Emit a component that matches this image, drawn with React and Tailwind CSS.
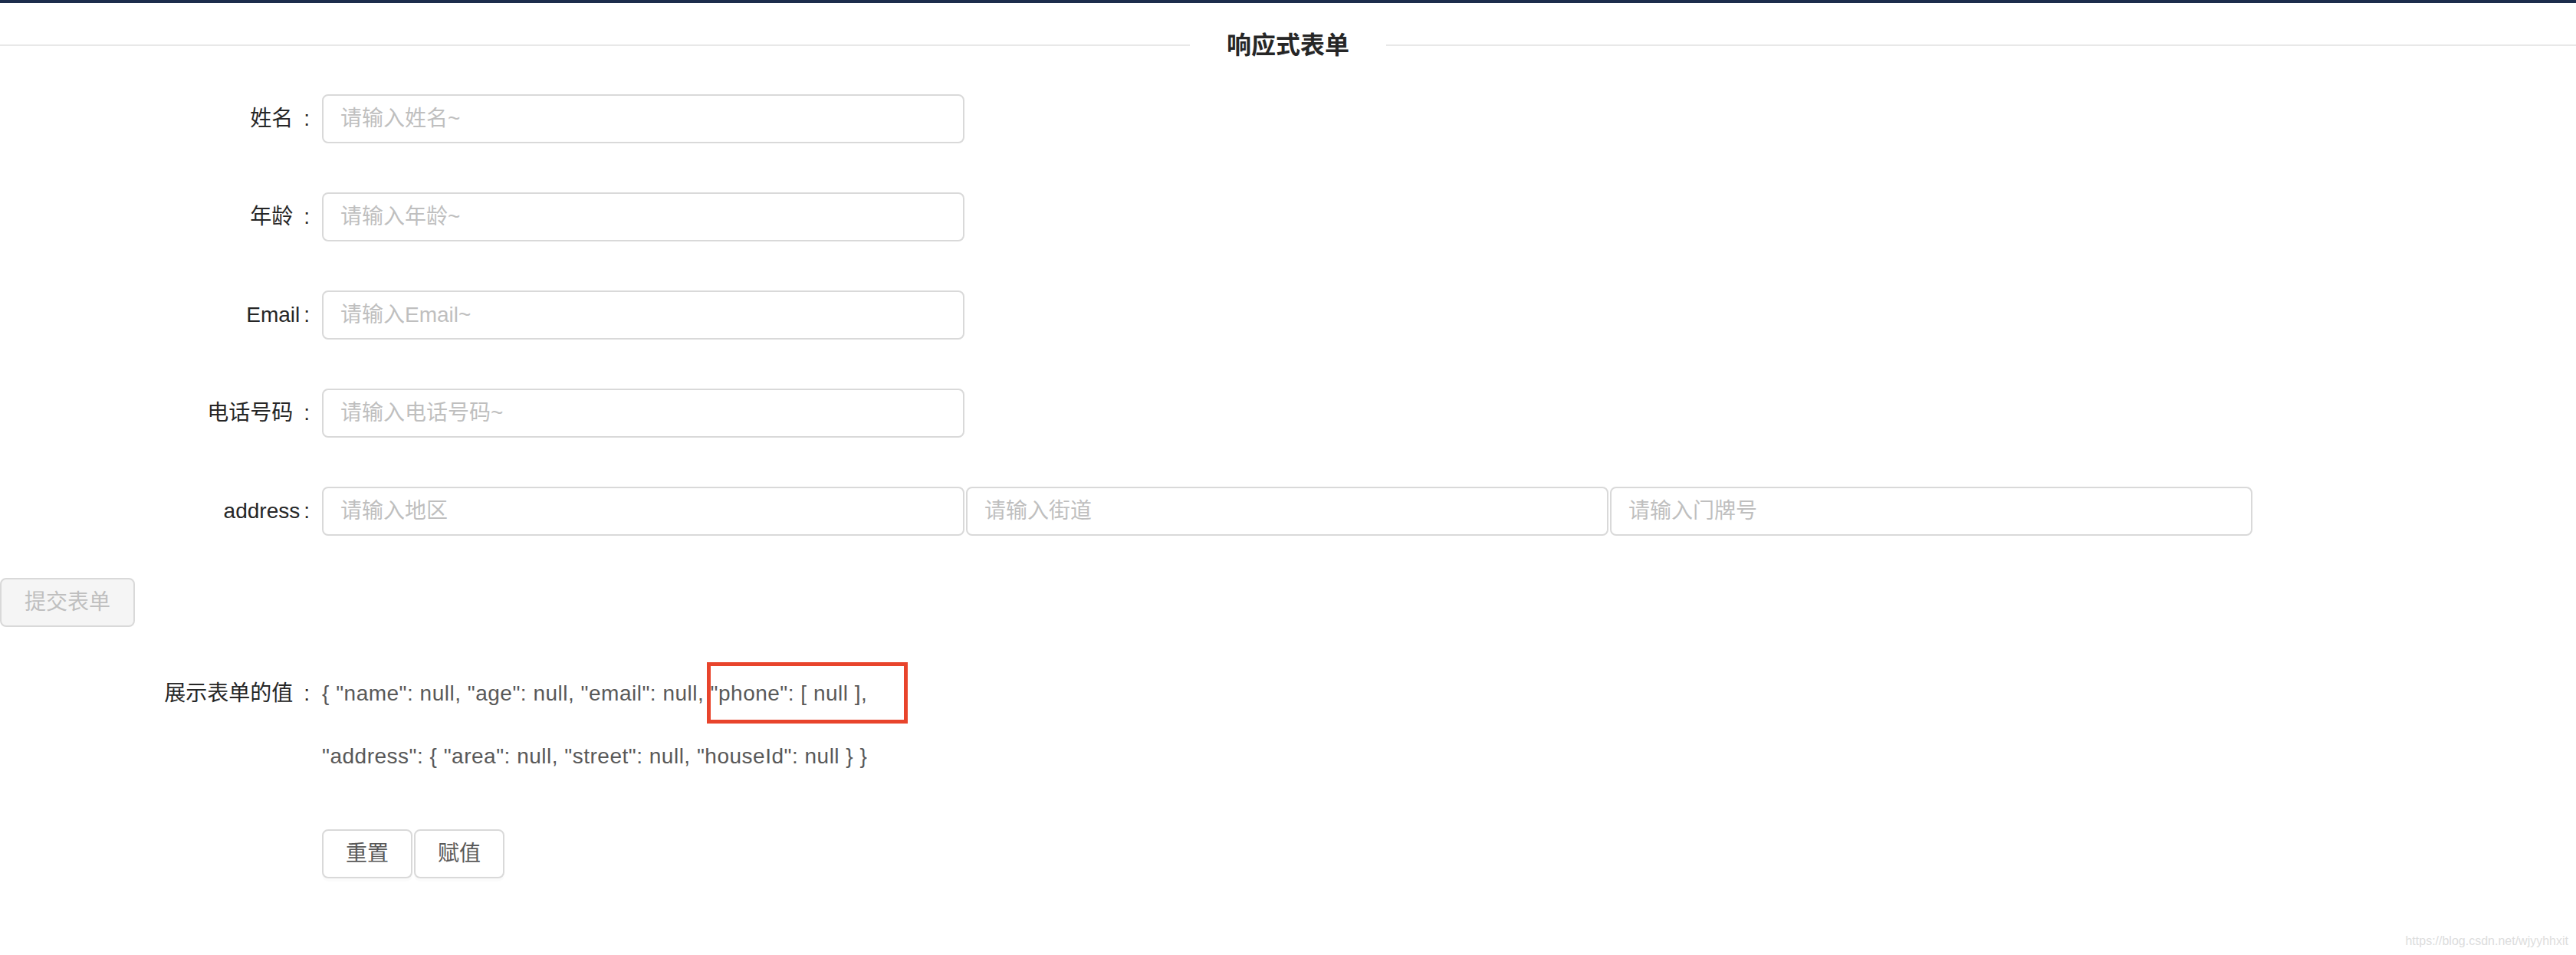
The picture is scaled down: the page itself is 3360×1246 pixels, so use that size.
import React from "react";

const rows = [
  { label: "姓名", ph: "请输入姓名~" },
  { label: "年龄", ph: "请输入年龄~" },
  { label: "Email", ph: "请输入Email~", latin: true },
  { label: "电话号码", ph: "请输入电话号码~" },
];

// label column: text right aligned, colon, then 16px gap before the control
const FieldLabel = ({ text, latin }) => {
  return (
    <div className="w-[420px] shrink-0 flex justify-end pr-[16px] text-[28px] text-[#262626]">
      <span>{text}</span>
      <span className={latin ? "ml-[5px]" : "ml-[14px]"}>:</span>
    </div>
  );
};

const TextInput = ({ placeholder }) => {
  return (
    <input
      type="text"
      placeholder={placeholder}
      className="w-[838px] h-[64px] shrink-0 bg-white border-2 border-[#d9d9d9] rounded-[8px] px-[22px] text-[28px] text-[#595959] placeholder:text-[#bfbfbf] outline-none"
    />
  );
};

const App = () => {
  return (
    <div className="relative w-full h-[1246px] overflow-hidden bg-white font-['Liberation_Sans','Noto_Sans_CJK_SC',sans-serif]">
      <div className="h-[4px] bg-[#1d2d4c]"></div>

      {/* divider with title */}
      <div className="mt-[33px] h-[44px] flex items-center">
        <div className="flex-1 h-[2px] bg-[#e8e8e8]"></div>
        <div className="px-[48px] text-[32px] leading-none font-semibold text-[#262626]">
          响应式表单
        </div>
        <div className="flex-1 h-[2px] bg-[#e8e8e8]"></div>
      </div>

      <form className="mt-[34px] flex flex-col" onSubmit={(e) => e.preventDefault()}>
        {rows.map((item, index) => {
          return (
            <div key={index} className="h-[80px] mb-[48px] flex items-center">
              <FieldLabel text={item.label} latin={item.latin} />
              <TextInput placeholder={item.ph} />
            </div>
          );
        })}

        <div className="h-[80px] flex items-center">
          <FieldLabel text="address" latin />
          <div className="flex gap-[2px]">
            <TextInput placeholder="请输入地区" />
            <TextInput placeholder="请输入街道" />
            <TextInput placeholder="请输入门牌号" />
          </div>
        </div>

        <div className="mt-[47px]">
          <button
            type="button"
            disabled
            className="w-[176px] h-[64px] bg-[#f5f5f5] border-2 border-[#d9d9d9] rounded-[8px] text-[28px] text-[#bfbfbf]"
          >
            提交表单
          </button>
        </div>

        <div className="mt-[46px] flex items-start">
          <div className="w-[420px] shrink-0 flex justify-end pr-[16px] text-[28px] leading-[82px] text-[#262626]">
            <span>展示表单的值</span>
            <span className="ml-[14px]">:</span>
          </div>
          <div className="text-[28px] leading-[82px] tracking-[0.5px] text-[#595959]">
            <div className="whitespace-nowrap">
              {'{ "name": null, "age": null, "email": null, '}
              <span className="relative inline-block">
                {'"phone": [ null ],'}
                <span className="absolute -left-[5px] top-0 w-[262px] h-[80px] border-[5px] border-[#e8442c]"></span>
              </span>
            </div>
            <div className="whitespace-nowrap">
              {'"address": { "area": null, "street": null, "houseId": null } }'}
            </div>
          </div>
        </div>

        <div className="mt-[54px] pl-[420px] flex gap-[2px]">
          <button
            type="button"
            className="w-[118px] h-[64px] bg-white border-2 border-[#d9d9d9] rounded-[8px] text-[28px] text-[#595959] shadow-[0_4px_0_rgba(0,0,0,0.015)]"
          >
            重置
          </button>
          <button
            type="button"
            className="w-[118px] h-[64px] bg-white border-2 border-[#d9d9d9] rounded-[8px] text-[28px] text-[#595959] shadow-[0_4px_0_rgba(0,0,0,0.015)]"
          >
            赋值
          </button>
        </div>
      </form>

      <div className="absolute right-[10px] bottom-[6px] text-[16px] text-[#dddddd] font-['Liberation_Sans',sans-serif]">
        https://blog.csdn.net/wjyyhhxit
      </div>
    </div>
  );
};

export default App;
